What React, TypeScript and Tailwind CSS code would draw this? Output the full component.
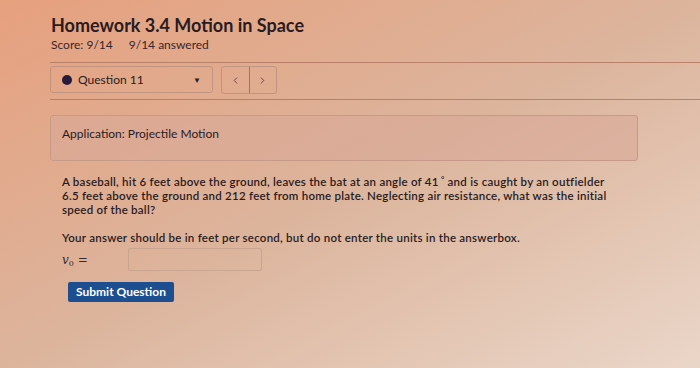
import React from 'react';
import { ChevronLeft, ChevronRight } from 'lucide-react';

// Homework question page (photo of a screen, warm tint)

function Dot() {
  return <span className="inline-block size-[10px] rounded-full bg-[#2a1a3a]" />;
}

export default function App() {
  return (
    <div className="h-[368px] w-[700px] overflow-hidden bg-gradient-to-br from-[#e6a07e] via-[#dcb49c] to-[#ead6c8] pt-[13px] font-['Lato',sans-serif] text-[#2a1b21]">
      <div className="pl-[51px]">
        <h1 className="text-[18px] font-bold leading-[24px]">Homework 3.4 Motion in Space</h1>
        <div className="flex gap-[16px] text-[12px] leading-[16px] text-[#3a262a]">
          <span>Score: 9/14</span>
          <span>9/14 answered</span>
        </div>
      </div>

      <div className="ml-[50px] mt-[9px] flex gap-[8px] border-y border-[#b88068] pb-[5px] pt-[3px]">
        <div className="flex h-[27px] w-[163px] items-center rounded-[3px] border border-[#c29480] px-[11px]">
          <Dot />
          <span className="ml-[6px] text-[12px]">Question 11</span>
          <span className="ml-auto text-[8px] text-[#2a1b21]">▼</span>
        </div>
        <div className="flex h-[28px] w-[56px] rounded-[3px] border border-[#c29480]">
          <button className="flex flex-1 items-center justify-center border-r border-[#b66a5a] text-[#6a3a44]">
            <ChevronLeft size={11} strokeWidth={2} />
          </button>
          <button className="flex flex-1 items-center justify-center text-[#6a3a44]">
            <ChevronRight size={11} strokeWidth={2} />
          </button>
        </div>
      </div>

      <div className="ml-[50px] mt-[15px] h-[46px] w-[588px] rounded-[3px] border border-[#c69a88] bg-[#d9a897]/60 px-[11px] pt-[9px] text-[12px]">
        Application: Projectile Motion
      </div>

      <div className="ml-[62px] mt-[14px] text-[11.5px] font-semibold leading-[14px] tracking-[0.25px]">
        <p>
          A baseball, hit 6 feet above the ground, leaves the bat at an angle of 41
          <sup className="text-[8px] leading-none"> °</sup> and is caught by an outfielder
          <br />
          6.5 feet above the ground and 212 feet from home plate. Neglecting air resistance, what was the initial
          <br />
          speed of the ball?
        </p>
        <p className="mt-[14px]">Your answer should be in feet per second, but do not enter the units in the answerbox.</p>
        <div className="mt-[3px] flex items-center gap-[14px]">
          <span className="w-[52px] font-['DejaVu_Serif',serif] text-[12px] font-normal italic tracking-normal text-[#3a2a30]">
            v<sub className="text-[8px] not-italic">0</sub> <span className="not-italic">=</span>
          </span>
          <div className="h-[23px] w-[134px] rounded-[2px] border border-[#c9a48e]" />
        </div>
        <button className="ml-[6px] mt-[11px] h-[20px] w-[106px] rounded-[2px] bg-[#1d4e8f] text-[12px] font-bold tracking-normal text-white">
          Submit Question
        </button>
      </div>
    </div>
  );
}
